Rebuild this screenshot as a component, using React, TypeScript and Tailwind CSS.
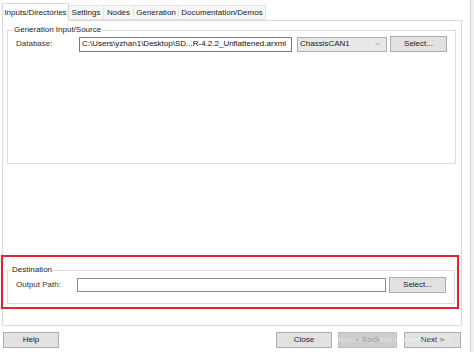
import { ChevronDown } from "lucide-react";

const font = { fontFamily: '"Liberation Sans", Arial, sans-serif' };

function Btn({ label, w, disabled }: { label: string; w: string; disabled?: boolean }) {
  return (
    <div
      className={`${w} h-[16px] flex items-center justify-center border text-[8px] ${
        disabled ? "bg-[#cccccc] border-[#bfbfbf] text-[#8a8a8a]" : "bg-[#e1e1e1] border-[#adadad] text-[#1a1a1a]"
      }`}
    >
      {label}
    </div>
  );
}

const tab =
  "shrink-0 whitespace-nowrap h-[15px] mb-[1px] bg-[#f7f7f7] border border-l-0 border-[#e3e3e3] flex items-center justify-center";

export default function App() {
  return (
    <div className="w-[474px] h-[352px] bg-white flex overflow-hidden relative text-[#1a1a1a]" style={font}>
      <div className="w-[470px] shrink-0 flex flex-col">
        {/* Tabs */}
        <div className="flex items-end h-[21px] pt-[3px] pl-[2px] text-[8px] relative z-10">
          <div className="shrink-0 whitespace-nowrap w-[67px] h-[18px] bg-white border border-b-0 border-[#d9d9d9] flex items-center justify-center">
            Inputs/Directories
          </div>
          <div className={`${tab} w-[35px]`}>Settings</div>
          <div className={`${tab} w-[30px]`}>Nodes</div>
          <div className={`${tab} w-[45px]`}>Generation</div>
          <div className={`${tab} w-[87px]`}>Documentation/Demos</div>
        </div>

        {/* Tab page */}
        <div className="ml-[2px] w-[460px] h-[306px] -mt-[1px] border border-[#d9d9d9] bg-white flex flex-col text-[8px]">
          <fieldset className="ml-[4px] mt-[4px] w-[447px] h-[139px] border border-[#dcdcdc] px-[8px]">
            <legend className="px-[1px] ml-[-3px] leading-[10px] text-[#222]">Generation Input/Source</legend>
            <div className="flex items-center pt-[1px]">
              <span className="w-[63px] text-[#333]">Database:</span>
              <div className="w-[213px] h-[15px] border border-[#7a7a7a] bg-white flex items-center px-[2px] text-[#111] whitespace-nowrap">
                C:\Users\yzhan1\Desktop\SD...R-4.2.2_Unflattened.arxml
              </div>
              <div className="ml-[5px] w-[90px] h-[15px] border border-[#adadad] bg-[#e8e8e8] flex items-center justify-between pl-[2px] pr-[4px] text-[#1a1a1a]">
                <span>ChassisCAN1</span>
                <ChevronDown size={8} strokeWidth={1.5} className="text-[#777]" />
              </div>
              <div className="ml-[3px]">
                <Btn label="Select..." w="w-[57px]" />
              </div>
            </div>
          </fieldset>

          <fieldset className="ml-[4px] mt-[101px] w-[446px] h-[39px] border border-[#dcdcdc] px-[8px]">
            <legend className="px-[1px] ml-[-5px] leading-[10px] text-[#222]">Destination</legend>
            <div className="flex items-center pt-[2px]">
              <span className="w-[61px] text-[#333]">Output Path:</span>
              <div className="w-[309px] h-[14px] border border-[#8a8a8a] bg-white" />
              <div className="ml-[3px]">
                <Btn label="Select..." w="w-[57px]" />
              </div>
            </div>
          </fieldset>
        </div>

        {/* Bottom buttons */}
        <div className="flex items-center mt-[6px] pl-[3px]">
          <Btn label="Help" w="w-[56px]" />
          <div className="ml-[217px]">
            <Btn label="Close" w="w-[56px]" />
          </div>
          <div className="ml-[6px]">
            <Btn label="< Back" w="w-[59px]" disabled />
          </div>
          <div className="ml-[7px]">
            <Btn label="Next >" w="w-[57px]" />
          </div>
        </div>
      </div>
      <div className="w-[4px] shrink-0 h-full border-l border-[#d6d6d6] bg-[#f0f0f0]" />

      {/* annotation overlay */}
      <div className="absolute left-[1px] top-[255px] w-[458px] h-[54px] border-2 border-[#e0232d] pointer-events-none" />
      <div className="absolute left-[334px] top-[334px] text-[8px] text-white/50 pointer-events-none whitespace-nowrap">
        https://blog.csdn.net/weixin_4377
      </div>
    </div>
  );
}
